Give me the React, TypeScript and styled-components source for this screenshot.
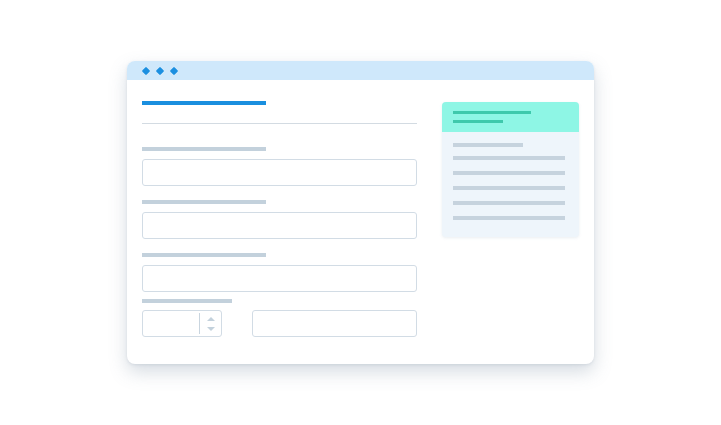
import React from 'react';
import styled, { createGlobalStyle } from 'styled-components';

const GlobalStyle = createGlobalStyle`
  html, body {
    margin: 0;
    padding: 0;
    background: #ffffff;
    font-family: "Liberation Sans", Arial, sans-serif;
  }
`;

const Page = styled.div`
  width: 721px;
  height: 425px;
  display: flex;
  align-items: center;
  justify-content: center;
`;

const Window = styled.div`
  width: 467px;
  height: 303px;
  background: #ffffff;
  border-radius: 8px;
  overflow: hidden;
  box-shadow: 0 8px 18px rgba(120, 140, 160, 0.3), 0 1px 3px rgba(120, 140, 160, 0.18);
  display: flex;
  flex-direction: column;
`;

const TitleBar = styled.div`
  height: 19px;
  flex: 0 0 19px;
  background: #cfe8fb;
  display: flex;
  align-items: center;
  gap: 8px;
  padding-left: 16px;
`;

const Dot = styled.span`
  width: 6px;
  height: 6px;
  background: #1b8fe0;
  transform: rotate(45deg);
  border-radius: 1px;
`;

const Body = styled.div`
  flex: 1;
  display: flex;
  gap: 25px;
  padding: 21px 15px 0 15px;
`;

const Main = styled.div`
  width: 275px;
  display: flex;
  flex-direction: column;
`;

const Heading = styled.div`
  width: 124px;
  height: 4px;
  background: #1a8fdf;
`;

const Divider = styled.div`
  height: 1px;
  background: #d3dbe2;
  margin: 18px 0 23px;
`;

const Label = styled.div<{ $width: number; $gap?: number }>`
  width: ${p => p.$width}px;
  height: 4px;
  background: #c3d1dc;
  margin-bottom: ${p => p.$gap ?? 8}px;
`;

const Field = styled.div<{ $width?: number; $gap?: number }>`
  width: ${p => (p.$width ? `${p.$width - 2}px` : 'auto')};
  height: 25px;
  border: 1px solid #d2dce5;
  border-radius: 3px;
  background: #ffffff;
  margin-bottom: ${p => p.$gap ?? 14}px;
`;

const Row = styled.div`
  display: flex;
  gap: 30px;
`;

const Spinner = styled(Field)`
  display: flex;
  justify-content: flex-end;
`;

const SpinControls = styled.div`
  width: 21px;
  border-left: 1px solid #c9d5df;
  margin: 2px 0;
  display: flex;
  flex-direction: column;
  align-items: center;
  justify-content: center;
  gap: 6px;
`;

const Arrow = styled.span<{ $down?: boolean }>`
  width: 0;
  height: 0;
  border-left: 4px solid transparent;
  border-right: 4px solid transparent;
  ${p =>
    p.$down
      ? 'border-top: 4px solid #c3d1dc;'
      : 'border-bottom: 4px solid #c3d1dc;'}
`;

const Card = styled.div`
  width: 137px;
  height: 135px;
  margin-top: 1px;
  border-radius: 4px;
  overflow: hidden;
  background: #eef5fb;
  box-shadow: 0 1px 3px rgba(140, 160, 180, 0.18);
  display: flex;
  flex-direction: column;
`;

const CardHeader = styled.div`
  height: 30px;
  background: #8ef6e5;
  padding: 9px 0 0 11px;
  box-sizing: border-box;
  display: flex;
  flex-direction: column;
  gap: 6px;
`;

const HeaderLine = styled.div<{ $width: number }>`
  width: ${p => p.$width}px;
  height: 3px;
  background: #3ec9ac;
`;

const CardBody = styled.div`
  padding: 11px 14px 0 11px;
  display: flex;
  flex-direction: column;
`;

const TextLine = styled.div<{ $width?: number; $gap: number }>`
  width: ${p => (p.$width ? `${p.$width}px` : '100%')};
  height: 4px;
  background: #c6d3de;
  margin-bottom: ${p => p.$gap}px;
`;

const App: React.FC = () => (
  <Page>
    <GlobalStyle />
    <Window>
      <TitleBar>
        <Dot />
        <Dot />
        <Dot />
      </TitleBar>
      <Body>
        <Main>
          <Heading />
          <Divider />
          <Label $width={124} />
          <Field />
          <Label $width={124} />
          <Field />
          <Label $width={124} />
          <Field $gap={7} />
          <Label $width={90} $gap={7} />
          <Row>
            <Spinner $width={80}>
              <SpinControls>
                <Arrow />
                <Arrow $down />
              </SpinControls>
            </Spinner>
            <Field $width={165} />
          </Row>
        </Main>
        <Card>
          <CardHeader>
            <HeaderLine $width={78} />
            <HeaderLine $width={50} />
          </CardHeader>
          <CardBody>
            <TextLine $width={70} $gap={9} />
            <TextLine $gap={11} />
            <TextLine $gap={11} />
            <TextLine $gap={11} />
            <TextLine $gap={11} />
            <TextLine $gap={0} />
          </CardBody>
        </Card>
      </Body>
    </Window>
  </Page>
);

export default App;
